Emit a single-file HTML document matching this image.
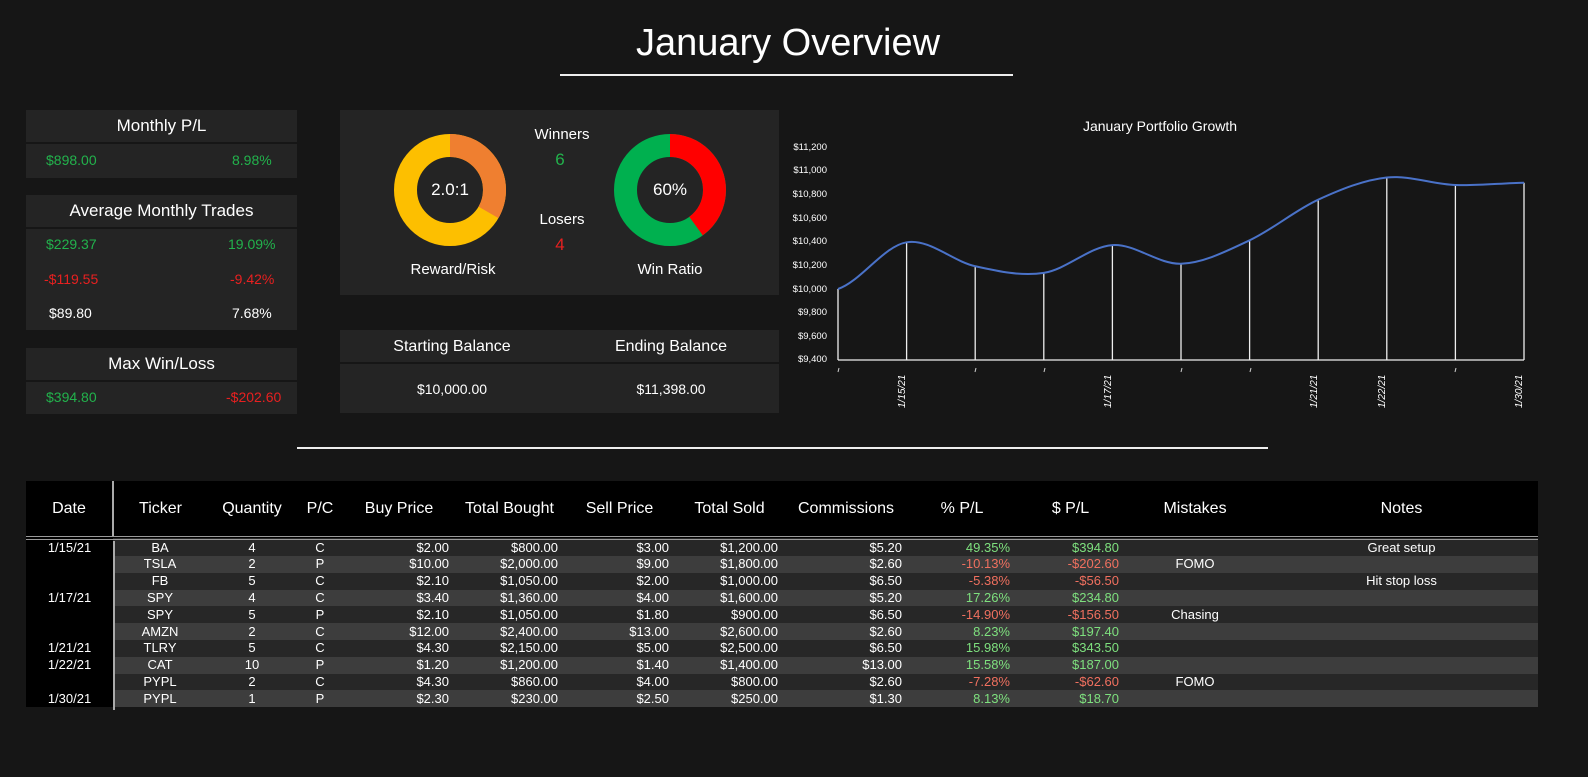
<!DOCTYPE html>
<html><head><meta charset="utf-8"><style>
*{margin:0;padding:0;box-sizing:border-box}
body{width:1588px;height:777px;background:#161616;color:#fff;font-family:"Liberation Sans Narrow","Liberation Sans",sans-serif;position:relative;overflow:hidden}
.a{position:absolute}
.p{position:absolute;background:#242424}
.h{position:absolute;background:#242424;text-align:center;font-size:17px;color:#fff}
.g{color:#22b24c}.r{color:#e82020}
.v{position:absolute;font-size:14px}
table{border-collapse:collapse;position:absolute;left:26px;top:481px;width:1512px;table-layout:fixed;font-size:13px}
th{background:#000;height:57px;font-size:16px;font-weight:normal;text-align:center;border-bottom:4px double #999}
td{height:16.8px;line-height:16px;padding:0}
tr:nth-child(odd) td{background:#3d3d3d}
tr:nth-child(even) td{background:#272727}
td.d{background:#000!important;text-align:center}
td.c{text-align:center}td.rt{text-align:right;padding-right:6px}
.tg{color:#7ee07e}.tr{color:#f0705f}
.yl{position:absolute;right:0;font-size:9.5px;font-family:"Liberation Sans Narrow","Liberation Sans",sans-serif}
</style></head><body>
<div class="a" style="left:0;width:1576px;top:22px;text-align:center;font-size:38px">January Overview</div>
<div class="a" style="left:560px;top:74px;width:453px;height:2px;background:#eee"></div>

<div class="h" style="left:26px;top:110px;width:271px;height:32px;line-height:32px">Monthly P/L</div>
<div class="p" style="left:26px;top:144px;width:271px;height:34px"></div>
<div class="v g" style="left:46px;top:152px">$898.00</div><div class="v g" style="left:232px;top:152px">8.98%</div>

<div class="h" style="left:26px;top:195px;width:271px;height:32px;line-height:32px">Average Monthly Trades</div>
<div class="p" style="left:26px;top:229px;width:271px;height:101px"></div>
<div class="v g" style="left:46px;top:236px">$229.37</div><div class="v g" style="left:228px;top:236px">19.09%</div>
<div class="v r" style="left:44px;top:271px">-$119.55</div><div class="v r" style="left:230px;top:271px">-9.42%</div>
<div class="v" style="left:49px;top:305px">$89.80</div><div class="v" style="left:232px;top:305px">7.68%</div>

<div class="h" style="left:26px;top:348px;width:271px;height:32px;line-height:32px">Max Win/Loss</div>
<div class="p" style="left:26px;top:382px;width:271px;height:32px"></div>
<div class="v g" style="left:46px;top:389px">$394.80</div><div class="v r" style="left:226px;top:389px">-$202.60</div>

<div class="p" style="left:340px;top:110px;width:439px;height:185px"></div>
<svg class="a" style="left:340px;top:110px" width="439" height="185">
<g transform="rotate(-90 110 80)">
<circle cx="110" cy="80" r="44.5" fill="none" stroke="#fdbf00" stroke-width="23"/>
<circle cx="110" cy="80" r="44.5" fill="none" stroke="#ef7f30" stroke-width="23" stroke-dasharray="93.2 400"/>
</g>
<g transform="rotate(-90 330 80)">
<circle cx="330" cy="80" r="44.5" fill="none" stroke="#00b04f" stroke-width="23"/>
<circle cx="330" cy="80" r="44.5" fill="none" stroke="#ff0000" stroke-width="23" stroke-dasharray="111.8 400"/>
</g>
</svg>
<div class="a" style="left:410px;top:180px;width:80px;text-align:center;font-size:17px">2.0:1</div>
<div class="a" style="left:630px;top:180px;width:80px;text-align:center;font-size:17px">60%</div>
<div class="a" style="left:390px;top:261px;width:126px;text-align:center;font-size:15px">Reward/Risk</div>
<div class="a" style="left:610px;top:261px;width:120px;text-align:center;font-size:15px">Win Ratio</div>
<div class="a" style="left:520px;top:126px;width:84px;text-align:center;font-size:15px">Winners</div>
<div class="a" style="left:520px;top:150px;width:80px;text-align:center;font-size:17px;color:#22b24c">6</div>
<div class="a" style="left:520px;top:211px;width:84px;text-align:center;font-size:15px">Losers</div>
<div class="a" style="left:520px;top:235px;width:80px;text-align:center;font-size:17px;color:#e82020">4</div>

<div class="p" style="left:340px;top:330px;width:439px;height:32px"></div>
<div class="p" style="left:340px;top:364px;width:439px;height:49px"></div>
<div class="a" style="left:340px;top:338px;width:224px;text-align:center;font-size:16px">Starting Balance</div>
<div class="a" style="left:560px;top:338px;width:222px;text-align:center;font-size:16px">Ending Balance</div>
<div class="a" style="left:340px;top:381px;width:224px;text-align:center;font-size:14px">$10,000.00</div>
<div class="a" style="left:560px;top:381px;width:222px;text-align:center;font-size:14px">$11,398.00</div>

<div class="a" style="left:780px;top:118px;width:760px;text-align:center;font-size:14px">January Portfolio Growth</div>
<div class="a" style="left:780px;top:140px;width:47px;height:230px">
<div class="yl" style="top:2px">$11,200</div><div class="yl" style="top:25px">$11,000</div><div class="yl" style="top:49px">$10,800</div><div class="yl" style="top:73px">$10,600</div><div class="yl" style="top:96px">$10,400</div><div class="yl" style="top:120px">$10,200</div><div class="yl" style="top:144px">$10,000</div><div class="yl" style="top:167px">$9,800</div><div class="yl" style="top:191px">$9,600</div><div class="yl" style="top:214px">$9,400</div>
</div>
<svg class="a" style="left:0;top:0" width="1588" height="420">
<g stroke="#eee" stroke-width="1.3">
<line x1="838" y1="289" x2="838" y2="360"/><line x1="906.6" y1="242.3" x2="906.6" y2="360"/><line x1="975.2" y1="266.2" x2="975.2" y2="360"/><line x1="1043.8" y1="272.9" x2="1043.8" y2="360"/><line x1="1112.4" y1="245.1" x2="1112.4" y2="360"/><line x1="1181" y1="263.7" x2="1181" y2="360"/><line x1="1249.6" y1="240.3" x2="1249.6" y2="360"/><line x1="1318.2" y1="199.7" x2="1318.2" y2="360"/><line x1="1386.8" y1="177.5" x2="1386.8" y2="360"/><line x1="1455.4" y1="185" x2="1455.4" y2="360"/><line x1="1524" y1="182.7" x2="1524" y2="360"/>
<line x1="838" y1="360" x2="1524" y2="360"/>
</g>
<g stroke="#ccc" stroke-width="1">
<line x1="839" y1="368" x2="838" y2="372"/><line x1="976" y1="368" x2="975" y2="372"/><line x1="1045" y1="368" x2="1044" y2="372"/><line x1="1182" y1="368" x2="1181" y2="372"/><line x1="1251" y1="368" x2="1250" y2="372"/><line x1="1456" y1="368" x2="1455" y2="372"/>
</g>
<path fill="none" stroke="#4a72c8" stroke-width="2" d="M838 289C860.9 281.2 883.7 246.1 906.6 242.3C929.5 238.5 952.3 261.1 975.2 266.2C998.1 271.3 1020.9 276.4 1043.8 272.9C1066.7 269.4 1089.5 246.6 1112.4 245.1C1135.3 243.6 1158.1 264.5 1181 263.7C1203.9 262.9 1226.7 251 1249.6 240.3C1272.5 229.6 1295.3 210.2 1318.2 199.7C1341.1 189.2 1363.9 180 1386.8 177.5C1409.7 175.1 1432.5 184.1 1455.4 185C1478.3 185.9 1501.1 183.1 1524 182.7"/>
<g fill="#fff" font-size="10" font-style="italic" font-family="Liberation Sans Narrow, Liberation Sans, sans-serif">
<text transform="translate(905 408) rotate(-90)">1/15/21</text>
<text transform="translate(1111 408) rotate(-90)">1/17/21</text>
<text transform="translate(1317 408) rotate(-90)">1/21/21</text>
<text transform="translate(1385 408) rotate(-90)">1/22/21</text>
<text transform="translate(1522 408) rotate(-90)">1/30/21</text>
</g>
</svg>

<div class="a" style="left:297px;top:447px;width:971px;height:2px;background:#eee"></div>

<table>
<colgroup><col style="width:87px"><col style="width:94px"><col style="width:90px"><col style="width:46px"><col style="width:112px"><col style="width:109px"><col style="width:111px"><col style="width:109px"><col style="width:124px"><col style="width:108px"><col style="width:109px"><col style="width:140px"><col style="width:273px"></colgroup>
<tr><th style="border-right:2px solid #aaa">Date</th><th>Ticker</th><th>Quantity</th><th>P/C</th><th>Buy Price</th><th>Total Bought</th><th>Sell Price</th><th>Total Sold</th><th>Commissions</th><th>% P/L</th><th>$ P/L</th><th>Mistakes</th><th>Notes</th></tr>
<tr><td class="d">1/15/21</td><td class="c">BA</td><td class="c">4</td><td class="c">C</td><td class="rt">$2.00</td><td class="rt">$800.00</td><td class="rt">$3.00</td><td class="rt">$1,200.00</td><td class="rt">$5.20</td><td class="rt tg">49.35%</td><td class="rt tg">$394.80</td><td class="c"></td><td class="c">Great setup</td></tr>
<tr><td class="d"></td><td class="c">TSLA</td><td class="c">2</td><td class="c">P</td><td class="rt">$10.00</td><td class="rt">$2,000.00</td><td class="rt">$9.00</td><td class="rt">$1,800.00</td><td class="rt">$2.60</td><td class="rt tr">-10.13%</td><td class="rt tr">-$202.60</td><td class="c">FOMO</td><td class="c"></td></tr>
<tr><td class="d"></td><td class="c">FB</td><td class="c">5</td><td class="c">C</td><td class="rt">$2.10</td><td class="rt">$1,050.00</td><td class="rt">$2.00</td><td class="rt">$1,000.00</td><td class="rt">$6.50</td><td class="rt tr">-5.38%</td><td class="rt tr">-$56.50</td><td class="c"></td><td class="c">Hit stop loss</td></tr>
<tr><td class="d">1/17/21</td><td class="c">SPY</td><td class="c">4</td><td class="c">C</td><td class="rt">$3.40</td><td class="rt">$1,360.00</td><td class="rt">$4.00</td><td class="rt">$1,600.00</td><td class="rt">$5.20</td><td class="rt tg">17.26%</td><td class="rt tg">$234.80</td><td class="c"></td><td class="c"></td></tr>
<tr><td class="d"></td><td class="c">SPY</td><td class="c">5</td><td class="c">P</td><td class="rt">$2.10</td><td class="rt">$1,050.00</td><td class="rt">$1.80</td><td class="rt">$900.00</td><td class="rt">$6.50</td><td class="rt tr">-14.90%</td><td class="rt tr">-$156.50</td><td class="c">Chasing</td><td class="c"></td></tr>
<tr><td class="d"></td><td class="c">AMZN</td><td class="c">2</td><td class="c">C</td><td class="rt">$12.00</td><td class="rt">$2,400.00</td><td class="rt">$13.00</td><td class="rt">$2,600.00</td><td class="rt">$2.60</td><td class="rt tg">8.23%</td><td class="rt tg">$197.40</td><td class="c"></td><td class="c"></td></tr>
<tr><td class="d">1/21/21</td><td class="c">TLRY</td><td class="c">5</td><td class="c">C</td><td class="rt">$4.30</td><td class="rt">$2,150.00</td><td class="rt">$5.00</td><td class="rt">$2,500.00</td><td class="rt">$6.50</td><td class="rt tg">15.98%</td><td class="rt tg">$343.50</td><td class="c"></td><td class="c"></td></tr>
<tr><td class="d">1/22/21</td><td class="c">CAT</td><td class="c">10</td><td class="c">P</td><td class="rt">$1.20</td><td class="rt">$1,200.00</td><td class="rt">$1.40</td><td class="rt">$1,400.00</td><td class="rt">$13.00</td><td class="rt tg">15.58%</td><td class="rt tg">$187.00</td><td class="c"></td><td class="c"></td></tr>
<tr><td class="d"></td><td class="c">PYPL</td><td class="c">2</td><td class="c">C</td><td class="rt">$4.30</td><td class="rt">$860.00</td><td class="rt">$4.00</td><td class="rt">$800.00</td><td class="rt">$2.60</td><td class="rt tr">-7.28%</td><td class="rt tr">-$62.60</td><td class="c">FOMO</td><td class="c"></td></tr>
<tr><td class="d">1/30/21</td><td class="c">PYPL</td><td class="c">1</td><td class="c">P</td><td class="rt">$2.30</td><td class="rt">$230.00</td><td class="rt">$2.50</td><td class="rt">$250.00</td><td class="rt">$1.30</td><td class="rt tg">8.13%</td><td class="rt tg">$18.70</td><td class="c"></td><td class="c"></td></tr>
</table>
<div class="a" style="left:113px;top:541px;width:2px;height:169px;background:#aaa"></div>
</body></html>
